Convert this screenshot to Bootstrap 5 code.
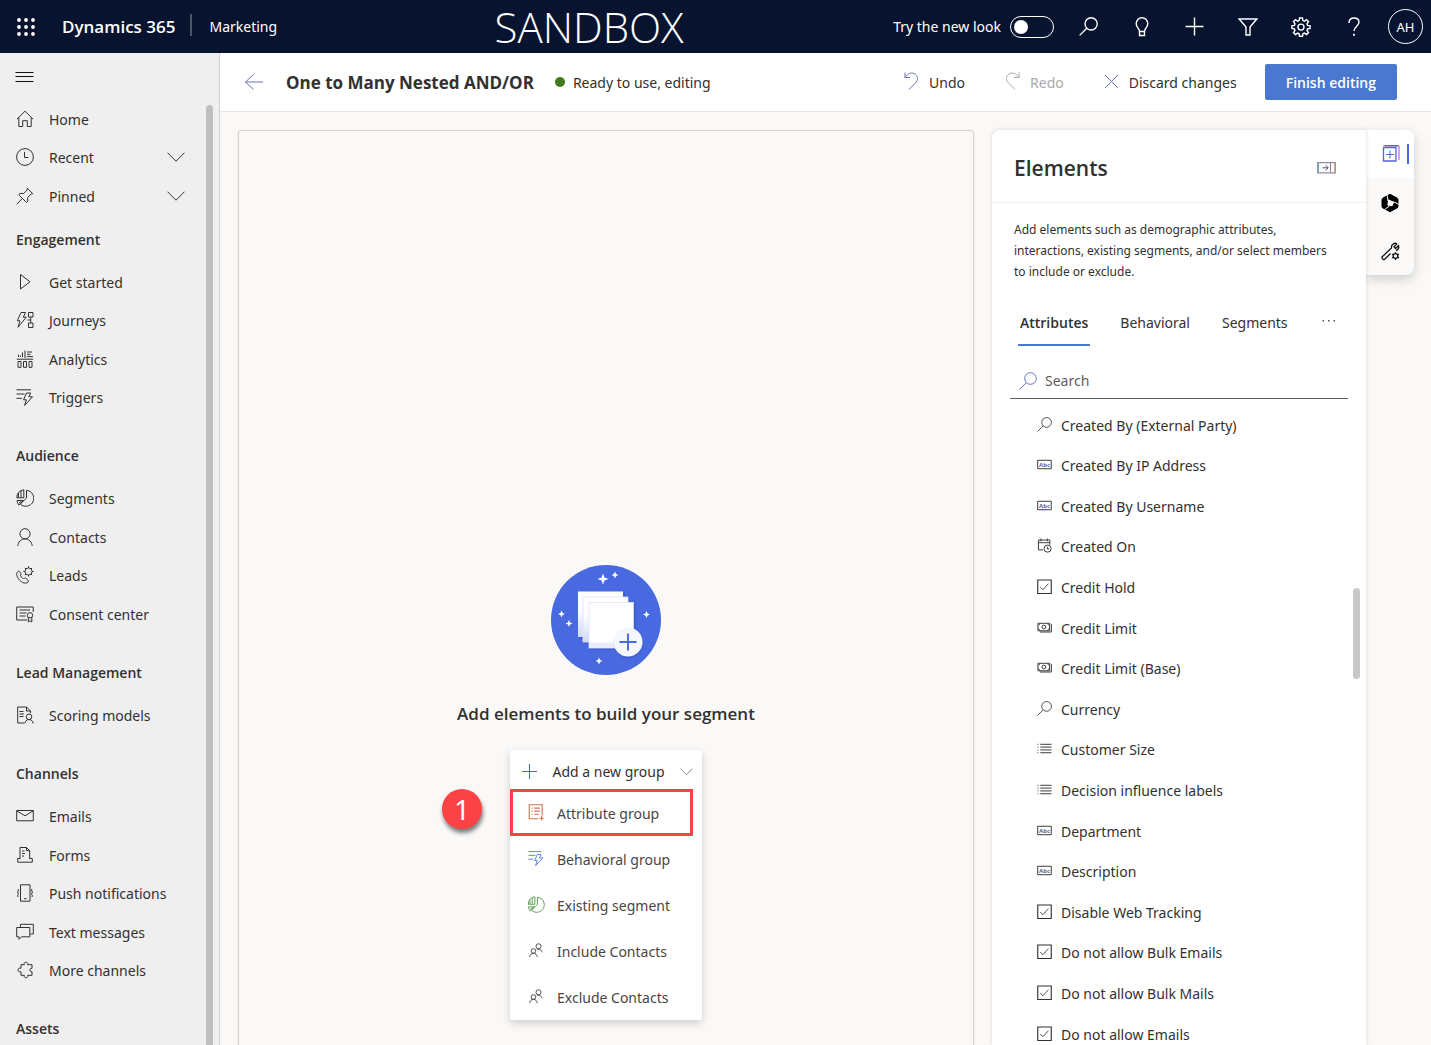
<!DOCTYPE html>
<html lang="en">
<head>
<meta charset="utf-8">
<meta name="viewport" content="width=device-width, initial-scale=1">
<title>One to Many Nested AND/OR - Dynamics 365 Marketing</title>
<link rel="stylesheet" href="https://cdn.jsdelivr.net/npm/bootstrap@5.3.0/dist/css/bootstrap.min.css">
<style>
  body { font-family: "Noto Sans", "Open Sans", sans-serif; font-size: 14px; line-height: 20px; color: #323130; background: #faf9f8; }
  a { color: inherit; text-decoration: none; }
  button { color: inherit; }
  svg { display: block; flex: none; fill: none; stroke: currentColor; }
  .solid-art { stroke: none; }
  .plain-btn { background: none; border: 0; padding: 0; }

  .topbar { height: 53px; background: #08142f; color: #fff; padding: 0 8px 0 17px; }
  .brand { font-family: "Open Sans", sans-serif; font-size: 17px; font-weight: 600; line-height: 24px; margin-left: 27px; }
  .brand-rule { width: 2px; height: 22px; background: #4c5468; margin: 0 17px 4px 15px; }
  .top-text { padding-top: 1px; }
  .env-name { font-family: "Open Sans", sans-serif; font-size: 42px; font-weight: 300; line-height: 52px; padding-left: 8px; }
  .top-btn { width: 53px; height: 53px; display: flex; align-items: center; justify-content: center; }
  .look-switch { appearance: none; width: 44px; height: 22px; border: 1px solid #fff; border-radius: 11px; margin: 0 8px 0 9px; position: relative; }
  .look-switch::before { content: ""; position: absolute; left: 3px; top: 3px; width: 14px; height: 14px; border-radius: 50%; background: #fff; }
  .look-switch:checked::before { left: auto; right: 3px; }
  .avatar { width: 35px; height: 35px; border: 1px solid #fff; border-radius: 50%; margin-left: 8px; font-size: 13px; }

  .sidebar { width: 220px; background: #efefef; border-right: 1px solid #d2d0ce; flex: none; }
  .menu-btn { height: 48px; padding-left: 15px; }
  .side-item { height: 38px; padding: 0 21px 0 16px; gap: 15px; }
  .side-item:nth-child(2n+3) { margin-top: 1px; }
  .side-late .side-item:nth-child(2n+3) { margin-top: 0; }
  .side-late .side-item:nth-child(2n) { margin-top: 1px; }
  .side-item > svg { position: relative; top: -1px; }
  .side-head { font-family: "Open Sans", sans-serif; font-size: 14px; font-weight: 600; line-height: 48px; margin: 15px 0 0 16px; }
  .side-head.first { margin-top: 0; }
  .side-thumb { width: 7px; margin: 4px 6px 0 0; border-radius: 4px 4px 0 0; background: #bfbfbf; }

  .cmdbar { height: 59px; background: #fff; border-bottom: 1px solid #e6e5e4; padding: 0 34px 0 24px; }
  .seg-title { font-family: "Open Sans", sans-serif; font-size: 17px; font-weight: 700; line-height: 24px; margin: 0 21px 0 22px; padding-top: 2px; }
  .state-dot { width: 10px; height: 10px; border-radius: 50%; background: #427a1c; margin-right: 8px; }
  .state-text { padding-top: 1px; }
  .cmd { gap: 10px; margin-right: 40px; padding-top: 2px; }
  .cmd > svg { position: relative; top: -2px; }
  .cmd:disabled { color: #a9a8a7; }
  .btn-finish { height: 36px; padding: 0 20px; border-radius: 2px; background: #4a78d0; color: #fff; font-family: "Open Sans", sans-serif; font-size: 14px; font-weight: 600; margin-left: -12px; }
  .btn-finish:hover { background: #3c68bb; color: #fff; }
  .ico-violet { color: #6b70b8; }

  .workspace { padding: 18px 17px 0 18px; }
  .canvas { border: 1px solid #d4d3d2; border-bottom: 0; border-radius: 4px 4px 0 0; padding-top: 434px; margin-right: 18px; box-shadow: 0 1px 3px rgba(0,0,0,.08); }
  .empty-title { font-family: "Open Sans", sans-serif; font-size: 17px; font-weight: 600; line-height: 24px; margin: 27px 0 24px; }
  .group-box { width: 192px; background: #fff; border-radius: 2px; box-shadow: 0 3px 8px rgba(0,0,0,.18); position: relative; }
  .group-btn { height: 40px; padding: 3px 9px 0 12px; }
  .ico-plus { stroke: #4869e0; }
  .group-item { height: 46px; padding: 2px 0 0 17px; gap: 12px; color: #484644; }
  .group-item > svg { position: relative; top: -2px; }
  .callout-frame { position: absolute; left: 0; top: 39px; width: 183px; height: 47px; border: 3px solid #fb4346; }
  .callout-num { position: absolute; left: -68px; top: 39px; width: 40px; height: 40px; border-radius: 50%; background: #fb4346; color: #fff; font: 28px/40px "Noto Sans", sans-serif; text-align: center; box-shadow: 1px 4px 4px rgba(0,0,0,.5); }

  .panel { width: 374px; background: #fff; border-radius: 8px 0 0 0; box-shadow: 0 0 4px rgba(0,0,0,.14); flex: none; z-index: 1; }
  .panel-head { height: 73px; border-bottom: 1px solid #f0efee; padding: 3px 30px 0 22px; }
  .panel-title { font-family: "Open Sans", sans-serif; font-size: 21px; font-weight: 600; line-height: 28px; }
  .panel-note { font-size: 12px; line-height: 21px; padding: 16px 30px 0 22px; }
  .tab-row { padding: 28px 30px 0 26px; }
  .tab-item { padding: 3px 2px 11px; border-bottom: 2px solid transparent; margin-right: 28px; }
  .tab-item.active { font-family: "Open Sans", sans-serif; font-weight: 600; border-color: #4a78d0; }
  .search-row { height: 36px; margin: 17px 18px 0; padding: 0 9px; border-bottom: 1px solid #605e5c; gap: 8px; }
  .search-row input { border: 0; padding: 1px 0 0; outline: 0; background: none; color: #323130; }
  .search-row input::placeholder { color: #605e5c; opacity: 1; }
  .attr-list { padding: 7px 0 0 45px; }
  .attr { height: 40px; gap: 9px; }
  .attr > svg { position: relative; top: -2px; }
  .attr:nth-child(5n+3), .attr:nth-child(5n+5), .attr:nth-child(5n+6) { margin-top: 1px; }
  .attr-thumb { width: 7px; height: 91px; border-radius: 4px; background: #c8c8c8; margin: 189px 6px 0 0; flex: none; }

  .rail { width: 48px; border-radius: 0 8px 8px 0; background: #faf9f8; box-shadow: 0 4px 12px rgba(0,0,0,.18); overflow: hidden; flex: none; }
  .rail-shell { flex: none; }
  .rail-btn { height: 48px; display: flex; align-items: center; width: 48px; padding-left: 15px; }
  .rail-btn.active { background: #fff; gap: 6px; margin-bottom: 1px; }
  .rail-mark { width: 2px; height: 20px; background: #4a68d8; }
</style>
<script src="https://cdn.jsdelivr.net/npm/bootstrap@5.3.0/dist/js/bootstrap.bundle.min.js"></script>
</head>
<body class="vh-100 overflow-hidden d-flex flex-column">

<svg width="0" height="0" class="position-absolute" aria-hidden="true">
  <defs>
    <symbol id="i-search" viewBox="0 0 18 18"><circle cx="11.5" cy="6.5" r="5.8"/><path d="M7.4 10.6.6 17.4"/></symbol>
    <symbol id="i-down" viewBox="0 0 18 10"><path d="M.5.7 9 9.2 17.5.7"/></symbol>
    <symbol id="i-home" viewBox="0 0 18 18"><path d="M.9 9.2 9 1.2l8.1 8M2.8 7.6v8.9h3.9v-5.8h4.600v5.8h3.900V7.600"/></symbol>
    <symbol id="i-clock" viewBox="0 0 18 18"><circle cx="9" cy="9" r="8.400"/><path d="M8.500 3.800v5.700h4"/></symbol>
    <symbol id="i-pin" viewBox="0 0 18 18"><path d="M11.300 1.200l5.500 5.500-1.700.3-3.400 3.400.1 3.700-1.400 1.300L2.700 7.700 4 6.400l3.700.1 3.300-3.400zM6.300 11.600.6 17.300"/></symbol>
    <symbol id="i-play" viewBox="0 0 18 18"><path d="M4.500 1.500v14.500l9.500-7.200z"/></symbol>
    <symbol id="i-journey" viewBox="0 0 18 18"><path d="M5 1.500h4.500L7.300 6.200h3L2 16.300l2-6.500H1.300zM12.500 1.500h4.500v4.500h-4.500zM12.500 12h4.500v4.500h-4.500zM14.700 6v6M11.500 9h3.200"/></symbol>
    <symbol id="i-analytics" viewBox="0 0 18 18"><path d="M.8 9.200h16.500M2.500 7V4.500M4.500 7V5.500M6.500 7V2.500M9 8V.5M11 2h5M11 4.300h3.500M11 6.600h6M2 11.500h3v5.800H2zM7.500 11.500h3v5.800h-3zM13 11.500h3v5.800h-3z"/></symbol>
    <symbol id="i-trigger" viewBox="0 0 18 18"><path d="M.5 1.800h14.500M.5 6h8M.5 10.300h5.500M10.500 5h4.200l-1.900 3.800h3.700L8.600 17.500l1.700-5.700H7.500z"/></symbol>
    <symbol id="i-pie" viewBox="0 0 18 18"><path d="M10.500 1.300a8 8 0 1 1-6.200 13.800L10.500 9zM7.800.8v8H.8a7.600 7.600 0 0 1 7-8zM5 2v6.500M2.500 4v4.500M1 11.500h6.500L2.800 16A8 8 0 0 1 1 11.500zM3 14l3-2.500"/></symbol>
    <symbol id="i-person" viewBox="0 0 18 18"><circle cx="9" cy="5.800" r="5.100"/><path d="M1.800 18c.3-4 3.300-7.100 7.200-7.100s6.900 3.100 7.200 7.100"/></symbol>
    <symbol id="i-lead" viewBox="0 0 18 18"><path d="M2.700 5 5 7.300c.3 1.700-1.500 1.600.6 4s2.400.6 4 .8l3 2.600c-.2 1.800-2.400 2.900-4.600 2.200C4.300 16 .7 11.400.7 8.300c0-1.500.8-2.700 2-3.300z"/><circle cx="12.500" cy="5.500" r="3.600"/><path d="M12.500.3v1.600M12.500 9v1.600M7.300 5.500h1.600M16 5.500h1.600M8.900 1.900 10 3M15 8l1.100 1.100M8.900 9.100 10 8M15 3l1.100-1.100"/></symbol>
    <symbol id="i-consent" viewBox="0 0 18 18"><path d="M11 15H.7V2h16.500v5M3.500 5h10.500M3.500 8h7M3.500 11h6M12.300 12v5l1.700-1.300 1.800 1.300v-5"/><circle cx="14" cy="10.300" r="2.700"/></symbol>
    <symbol id="i-score" viewBox="0 0 18 18"><path d="M8 17H1.700V1h8.800l4 4v2M10.500 1v4h4M3.500 5.500h4M3.500 8h4.500M3.500 10.500h4"/><circle cx="13" cy="10.800" r="2.800"/><path d="M8.800 17.500c.2-2.300 2-4 4.200-4s4 1.700 4.200 4"/></symbol>
    <symbol id="i-mail" viewBox="0 0 18 18"><path d="M.7 3.500h16.600v10.300H.7zM.7 3.800 9 8.800l8.300-5"/></symbol>
    <symbol id="i-form" viewBox="0 0 18 18"><path d="M4 13V1.500h6.500l3.200 3.200V13M10.500 1.500v3.200h3.200M6 5h2.500M6 7.500h3M6 10h2M4 12.500H1.700v3.700h14.600v-3.700h-2.600"/></symbol>
    <symbol id="i-push" viewBox="0 0 18 18"><path d="M4.500.8h9.500v16.400H4.500zM8 14.700h2.500M2 5c1.800 1.500-1.600 2.500 0 4s-1.400 2 0 4M16 5c-1.800 1.500 1.600 2.500 0 4s1.400 2 0 4"/></symbol>
    <symbol id="i-chat" viewBox="0 0 18 18"><path d="M4.500 4V1.300h12.800V11h-3M.7 4.500h13.100v9.300H5.500L3 16.300v-2.500H.7z"/></symbol>
    <symbol id="i-puzzle" viewBox="0 0 18 18"><path d="M5 3.700h3.300c-1-3.300 4.400-3.300 3.400 0H16v3.600c-2.800-.6-2.800 4 0 3.400v3.600h-4.300c1 3.300-4.400 3.300-3.400 0H5v-3.500c-4 1-4-4.600 0-3.600z"/></symbol>
    <symbol id="i-abc" viewBox="0 0 16 16"><path d="M.7 3.500h14.500v9H.7z"/></symbol>
    <symbol id="i-date" viewBox="0 0 16 16"><path d="M6.500 12.700H1.500V2.200h12.200v5M1.500 5h12.200M4.200.5v3M11 .5v3"/><circle cx="11.300" cy="11.300" r="3.800"/><path d="M11 9.200v2.500h2"/></symbol>
    <symbol id="i-check" viewBox="0 0 16 16"><path stroke-width="1.200" d="M.8 1h14.400v14.400H.8z"/><path d="m3.500 8.500 2.700 3 6-6.500" stroke-width=".9"/></symbol>
    <symbol id="i-money" viewBox="0 0 16 16"><path d="M1 3.500h12.500v8H1zM3 12.800h12.300V4M3.500 3.800 1.300 6M1.300 9l2.200 2.200M11 3.800 13.200 6M13.200 9 11 11.200"/><circle cx="7.300" cy="7.500" r="2"/></symbol>
    <symbol id="i-list" viewBox="0 0 16 16"><path d="M3.500 3.500H15.500M3.500 6.500H15.500M3.500 9.500H15.500M3.500 12.500H15.500M.5 3.500h1M.5 6.500h1M.5 9.500h1M.5 12.500h1"/></symbol>
    <symbol id="i-people" viewBox="0 0 16 16"><circle cx="5.300" cy="8.500" r="2.500"/><circle cx="10.700" cy="3.500" r="2.700"/><path d="M1.300 15c.1-2.300 1.800-4 4-4s3.900 1.700 4 4M9 7.300c2-1.700 5-.3 5.500 2.700"/></symbol>
    <symbol id="i-addlist" viewBox="0 0 16 16"><path d="M10 14H2V1.500h11.500V11M4 4.500h1M6.500 4.500h5M4 7.200h1M6.500 7.200h5M4 10h1M6.500 10h4M13 11.500v4M11 13.500h4"/></symbol>
  </defs>
</svg>

<header class="topbar d-flex align-items-center flex-shrink-0">
  <button class="plain-btn" aria-label="App launcher">
    <svg class="solid-art" width="18" height="18" viewBox="0 0 18 18"><g fill="#fff"><circle cx="2" cy="2" r="1.900"/><circle cx="9" cy="2" r="1.900"/><circle cx="16" cy="2" r="1.900"/><circle cx="2" cy="9" r="1.900"/><circle cx="9" cy="9" r="1.900"/><circle cx="16" cy="9" r="1.900"/><circle cx="2" cy="16" r="1.900"/><circle cx="9" cy="16" r="1.900"/><circle cx="16" cy="16" r="1.900"/></g></svg>
  </button>
  <a href="#" class="brand text-nowrap">Dynamics 365</a>
  <div class="brand-rule"></div>
  <a href="#" class="top-text text-nowrap">Marketing</a>
  <div class="env-name flex-grow-1 text-center">SANDBOX</div>
  <label for="newLook" class="top-text text-nowrap">Try the new look</label>
  <input type="checkbox" role="switch" id="newLook" class="look-switch">
  <button class="plain-btn top-btn" aria-label="Search"><svg width="19" height="19" stroke-width="1.300"><use href="#i-search"/></svg></button>
  <button class="plain-btn top-btn" aria-label="Insights"><svg width="18" height="20" viewBox="0 0 18 20" stroke-width="1.400"><path d="M6.500 14.500c0-3-3.300-4-3.300-8a5.800 5.800 0 0 1 11.600 0c0 4-3.300 5-3.300 8zM6.500 14.500v4h5v-4"/></svg></button>
  <button class="plain-btn top-btn" aria-label="New"><svg width="19" height="19" viewBox="0 0 19 19" stroke-width="1.400"><path d="M9.500.5v18M.5 9.500h18"/></svg></button>
  <button class="plain-btn top-btn" aria-label="Filter"><svg width="20" height="18" viewBox="0 0 20 18" stroke-width="1.400"><path d="M1.200 1h17.600L12 9v8H8V9z"/></svg></button>
  <button class="plain-btn top-btn" aria-label="Settings"><svg width="20" height="20" viewBox="0 0 20 20" stroke-width="1.400"><path d="M8.500 1h3l.4 2.600 1.500.6 2.100-1.500 2 2-1.500 2.100.6 1.600 2.500.4v2.600l-2.500.5-.6 1.600 1.500 2.100-2 2-2.100-1.500-1.500.7-.4 2.400h-3l-.4-2.400-1.500-.7-2.100 1.500-2-2L4 13.500l-.6-1.600-2.500-.5V8.800l2.500-.4L4 6.800 2.500 4.700l2-2 2.100 1.500 1.500-.6z"/><circle cx="10" cy="10.100" r="3"/></svg></button>
  <button class="plain-btn top-btn" aria-label="Help"><svg width="14" height="20" viewBox="0 0 14 20" stroke-width="1.400"><path d="M2 6c0-3 2-5 5-5s5 1.800 5 4.300C12 9 7 9.500 7 14"/><path d="M7 16.800v2" stroke-width="1.800"/></svg></button>
  <button class="plain-btn avatar">AH</button>
</header>

<div class="d-flex flex-grow-1 overflow-hidden">

  <nav class="sidebar d-flex flex-column" aria-label="Site map">
    <button class="plain-btn menu-btn d-flex align-items-center flex-shrink-0" aria-label="Collapse"><svg width="19" height="10" viewBox="0 0 19 10" color="#111"><path d="M.5.5h18M.5 4.500h18M.5 9.500h18"/></svg></button>
    <div class="d-flex flex-grow-1 overflow-hidden">
      <div class="flex-grow-1">
        <div>
          <a href="#" class="side-item d-flex align-items-center"><svg width="18" height="18"><use href="#i-home"/></svg>Home</a>
          <a href="#" class="side-item d-flex align-items-center"><svg width="18" height="18"><use href="#i-clock"/></svg>Recent<svg class="ms-auto" width="18" height="10"><use href="#i-down"/></svg></a>
          <a href="#" class="side-item d-flex align-items-center"><svg width="18" height="18"><use href="#i-pin"/></svg>Pinned<svg class="ms-auto" width="18" height="10"><use href="#i-down"/></svg></a>
        </div>
        <h2 class="side-head first">Engagement</h2>
        <div>
          <a href="#" class="side-item d-flex align-items-center"><svg width="18" height="18"><use href="#i-play"/></svg>Get started</a>
          <a href="#" class="side-item d-flex align-items-center"><svg width="18" height="18"><use href="#i-journey"/></svg>Journeys</a>
          <a href="#" class="side-item d-flex align-items-center"><svg width="18" height="18"><use href="#i-analytics"/></svg>Analytics</a>
          <a href="#" class="side-item d-flex align-items-center"><svg width="18" height="18"><use href="#i-trigger"/></svg>Triggers</a>
        </div>
        <h2 class="side-head">Audience</h2>
        <div class="side-late">
          <a href="#" class="side-item d-flex align-items-center"><svg width="18" height="18"><use href="#i-pie"/></svg>Segments</a>
          <a href="#" class="side-item d-flex align-items-center"><svg width="18" height="18"><use href="#i-person"/></svg>Contacts</a>
          <a href="#" class="side-item d-flex align-items-center"><svg width="18" height="18"><use href="#i-lead"/></svg>Leads</a>
          <a href="#" class="side-item d-flex align-items-center"><svg width="18" height="18"><use href="#i-consent"/></svg>Consent center</a>
        </div>
        <h2 class="side-head">Lead Management</h2>
        <div>
          <a href="#" class="side-item d-flex align-items-center"><svg width="18" height="18"><use href="#i-score"/></svg>Scoring models</a>
        </div>
        <h2 class="side-head">Channels</h2>
        <div class="side-late">
          <a href="#" class="side-item d-flex align-items-center"><svg width="18" height="18"><use href="#i-mail"/></svg>Emails</a>
          <a href="#" class="side-item d-flex align-items-center"><svg width="18" height="18"><use href="#i-form"/></svg>Forms</a>
          <a href="#" class="side-item d-flex align-items-center"><svg width="18" height="18"><use href="#i-push"/></svg>Push notifications</a>
          <a href="#" class="side-item d-flex align-items-center"><svg width="18" height="18"><use href="#i-chat"/></svg>Text messages</a>
          <a href="#" class="side-item d-flex align-items-center"><svg width="18" height="18"><use href="#i-puzzle"/></svg>More channels</a>
        </div>
        <h2 class="side-head">Assets</h2>
      </div>
      <div class="side-thumb"></div>
    </div>
  </nav>

  <div class="flex-grow-1 d-flex flex-column">
    <div class="cmdbar d-flex align-items-center flex-shrink-0">
      <button class="plain-btn ico-violet" aria-label="Back"><svg width="20" height="16" viewBox="0 0 20 16"><path d="M9.500.5 1.500 8l8 7.500M1.500 8H19"/></svg></button>
      <h1 class="seg-title text-nowrap mb-0">One to Many Nested AND/OR</h1>
      <span class="state-dot"></span>
      <span class="state-text text-nowrap me-auto">Ready to use, editing</span>
      <button class="plain-btn cmd d-flex align-items-center"><svg class="ico-violet" width="15" height="18" viewBox="0 0 15 18"><path d="M1 .5v5h5M1 5.500C3 2.500 5 1 7.500 1 11 1 13.500 3.500 13.500 6.500c0 2.500-1 3.500-8.500 11"/></svg>Undo</button>
      <button class="plain-btn cmd d-flex align-items-center" disabled><svg width="15" height="18" viewBox="0 0 15 18"><path d="M14 .5v5H9M14 5.500C12 2.500 10 1 7.500 1 4 1 1.500 3.500 1.500 6.500c0 2.500 1 3.500 8.500 11"/></svg>Redo</button>
      <button class="plain-btn cmd d-flex align-items-center"><svg class="ico-violet" width="15" height="15" viewBox="0 0 15 15"><path d="M1 1l13 13M14 1 1 14"/></svg>Discard changes</button>
      <button class="btn btn-finish">Finish editing</button>
    </div>

    <div class="workspace d-flex flex-grow-1 overflow-hidden">
      <main class="canvas flex-grow-1 d-flex flex-column align-items-center">
        <svg class="solid-art" width="110" height="110" viewBox="0 0 110 110" aria-hidden="true">
          <defs><linearGradient id="sheet" x1="0" y1="0" x2="0" y2="1"><stop offset=".4" stop-color="#fff"/><stop offset="1" stop-color="#cfd8f6"/></linearGradient></defs>
          <circle cx="55" cy="55" r="55" fill="#4869e0"/>
          <path fill="#3655bf" opacity=".45" d="M28 28h46v46H28zM33 34h46v45H33zM39 39h46v46H39z"/>
          <path fill="url(#sheet)" d="M27 26.500h45v45.500H27z"/>
          <path fill="url(#sheet)" stroke="#dfe5f9" stroke-width=".8" d="M32 32h45v45H32z"/>
          <path fill="#fff" stroke="#dfe5f9" stroke-width=".8" d="M38 37.500h44.500V83H38z"/>
          <path fill="#e9edfb" d="M38 77.500h44.500V83H38z"/>
          <circle cx="77.500" cy="78.500" r="15" fill="#2d4bb3" opacity=".3"/>
          <circle cx="77" cy="77" r="14.500" fill="#f5f7fe"/>
          <path stroke="#4869e0" stroke-width="1.900" d="M77 68.500v17M68.500 77h17"/>
          <g fill="#fff">
            <path d="M52 8.500l1.500 4 4 1.500-4 1.500-1.500 4-1.500-4-4-1.500 4-1.500z"/>
            <path id="spark" d="M64 6.500l1.100 2.400 2.400 1.100-2.400 1.100-1.100 2.400-1.100-2.400-2.400-1.100 2.400-1.100z"/>
            <use href="#spark" x="-53.500" y="39"/><use href="#spark" x="-46" y="48.500"/><use href="#spark" x="31.500" y="39.500"/><use href="#spark" x="-16" y="86"/>
          </g>
        </svg>
        <h2 class="empty-title">Add elements to build your segment</h2>
        <div class="group-box">
          <button class="plain-btn group-btn d-flex align-items-center w-100" aria-expanded="true"><svg class="ico-plus" width="15" height="15" viewBox="0 0 15 15"><path d="M7.500 0v15M0 7.500h15"/></svg><span class="mx-auto">Add a new group</span><svg width="13" height="8" viewBox="0 0 13 8" color="#8a8886"><path d="M.5.7l6 6 6-6"/></svg></button>
          <div>
            <a href="#" class="group-item d-flex align-items-center"><svg width="18" height="18" color="#c87a4c"><use href="#i-addlist"/></svg>Attribute group</a>
            <a href="#" class="group-item d-flex align-items-center"><svg width="18" height="16" color="#4a78d0"><use href="#i-trigger"/></svg>Behavioral group</a>
            <a href="#" class="group-item d-flex align-items-center"><svg width="18" height="17" color="#5c9a52"><use href="#i-pie"/></svg>Existing segment</a>
            <a href="#" class="group-item d-flex align-items-center"><svg width="18" height="15"><use href="#i-people"/></svg>Include Contacts</a>
            <a href="#" class="group-item d-flex align-items-center"><svg width="18" height="15"><use href="#i-people"/></svg>Exclude Contacts</a>
          </div>
          <div class="callout-frame"></div>
          <div class="callout-num">1</div>
        </div>
      </main>

      <aside class="panel d-flex flex-column">
        <div class="panel-head d-flex align-items-center justify-content-between flex-shrink-0">
          <h2 class="panel-title mb-0">Elements</h2>
          <button class="plain-btn" aria-label="Collapse pane"><svg width="19" height="12" viewBox="0 0 19 12"><path stroke="#908e9c" stroke-width="1.300" d="M.7.700h17.600v10.100H.7z"/><path stroke="#a46fa8" d="M13.500.7v10"/><path stroke="#e0a45c" d="M17.700 1.300v9"/><path stroke="#5ba7c8" d="M1.300 1.300v9"/><path stroke="#555" d="M5.500 5.800h5.500M8.700 3.300l2.500 2.500-2.500 2.500"/></svg></button>
        </div>
        <p class="panel-note mb-0">Add elements such as demographic attributes, interactions, existing segments, and/or select members to include or exclude.</p>
        <div class="tab-row d-flex flex-shrink-0" role="tablist">
          <button class="plain-btn tab-item active" role="tab" aria-selected="true">Attributes</button>
          <button class="plain-btn tab-item" role="tab">Behavioral</button>
          <button class="plain-btn tab-item me-0" role="tab">Segments</button>
          <button class="plain-btn ms-auto" aria-label="More tabs"><svg class="solid-art mb-3" width="14" height="4" viewBox="0 0 14 4"><path fill="#555" d="M.5 2H2v1.500H.500zM6 2h1.500v1.500H6zM11.500 2H13v1.500h-1.500z"/></svg></button>
        </div>
        <div class="search-row d-flex align-items-center flex-shrink-0">
          <svg width="18" height="18" color="#6674c9"><use href="#i-search"/></svg>
          <input type="text" class="flex-grow-1" placeholder="Search" aria-label="Search attributes">
        </div>
        <div class="d-flex flex-grow-1 overflow-hidden">
          <ul class="attr-list list-unstyled flex-grow-1 mb-0">
            <li class="attr d-flex align-items-center"><svg width="15" height="15"><use href="#i-search"/></svg>Created By (External Party)</li>
            <li class="attr d-flex align-items-center"><svg width="15" height="15" viewBox="0 0 15 15"><use href="#i-abc"/><text x="2" y="10" font-size="6" font-weight="700" fill="#5f6a8a" stroke="none">Abc</text></svg>Created By IP Address</li>
            <li class="attr d-flex align-items-center"><svg width="15" height="15" viewBox="0 0 15 15"><use href="#i-abc"/><text x="2" y="10" font-size="6" font-weight="700" fill="#5f6a8a" stroke="none">Abc</text></svg>Created By Username</li>
            <li class="attr d-flex align-items-center"><svg width="15" height="15"><use href="#i-date"/></svg>Created On</li>
            <li class="attr d-flex align-items-center"><svg width="15" height="15"><use href="#i-check"/></svg>Credit Hold</li>
            <li class="attr d-flex align-items-center"><svg width="15" height="15"><use href="#i-money"/></svg>Credit Limit</li>
            <li class="attr d-flex align-items-center"><svg width="15" height="15"><use href="#i-money"/></svg>Credit Limit (Base)</li>
            <li class="attr d-flex align-items-center"><svg width="15" height="15"><use href="#i-search"/></svg>Currency</li>
            <li class="attr d-flex align-items-center"><svg width="15" height="15"><use href="#i-list"/></svg>Customer Size</li>
            <li class="attr d-flex align-items-center"><svg width="15" height="15"><use href="#i-list"/></svg>Decision influence labels</li>
            <li class="attr d-flex align-items-center"><svg width="15" height="15" viewBox="0 0 15 15"><use href="#i-abc"/><text x="2" y="10" font-size="6" font-weight="700" fill="#5f6a8a" stroke="none">Abc</text></svg>Department</li>
            <li class="attr d-flex align-items-center"><svg width="15" height="15" viewBox="0 0 15 15"><use href="#i-abc"/><text x="2" y="10" font-size="6" font-weight="700" fill="#5f6a8a" stroke="none">Abc</text></svg>Description</li>
            <li class="attr d-flex align-items-center"><svg width="15" height="15"><use href="#i-check"/></svg>Disable Web Tracking</li>
            <li class="attr d-flex align-items-center"><svg width="15" height="15"><use href="#i-check"/></svg>Do not allow Bulk Emails</li>
            <li class="attr d-flex align-items-center"><svg width="15" height="15"><use href="#i-check"/></svg>Do not allow Bulk Mails</li>
            <li class="attr d-flex align-items-center"><svg width="15" height="15"><use href="#i-check"/></svg>Do not allow Emails</li>
          </ul>
          <div class="attr-thumb"></div>
        </div>
      </aside>

      <div class="rail-shell">
        <div class="rail">
          <button class="plain-btn rail-btn active" aria-label="Elements"><svg width="20" height="20" viewBox="0 0 20 20"><path stroke="#c58ade" stroke-width="1.500" d="M4 2h14v14"/><path stroke="#5a62d8" stroke-width="1.300" d="M2.500 3.500H15v13.500H2.500z"/><path stroke="#4a68d8" d="M2.500 1.500h14.500M9 6.500v8M5 10.500h8"/></svg><span class="rail-mark"></span></button>
          <button class="plain-btn rail-btn" aria-label="Copilot"><svg class="solid-art" width="18" height="20" viewBox="0 0 18 20"><path fill="#000" fill-rule="evenodd" d="M9 .8 16 4.500q1.500 1 1.500 2.500v6q0 1.500-1.500 2.500L9 19.200 2 15.500Q.5 14.500.5 13V7q0-1.500 1.500-2.500zM7.200 6.300 6.300 12.500l5 .8 1.900-4.300z"/><path stroke="#faf9f8" d="M6 1.500 7 8M18 11.500l-5.500-2.800M3.500 16.500 8.500 13"/></svg></button>
          <button class="plain-btn rail-btn" aria-label="Settings"><svg width="19" height="19" viewBox="0 0 19 19" color="#111" stroke-width="1.300"><path d="M16 1.800c-2.500-1.500-6 .5-5.500 4.200L1.500 14.500c-1.500 1.500.8 4 2.500 2.500L9.500 11.500M16 1.800l-3 3 1.500 1.700 3-2.800c.8 2-.4 4.300-2.500 4.800"/><circle cx="14.500" cy="14" r="2.300"/><path d="M14.500 10.200v1.300M14.500 16.500v1.500M11 12l1.300.7M18 12l-1.300.7M11 16l1.300-.7M18 16l-1.300-.7"/></svg></button>
        </div>
      </div>
    </div>
  </div>
</div>
</body>
</html>
